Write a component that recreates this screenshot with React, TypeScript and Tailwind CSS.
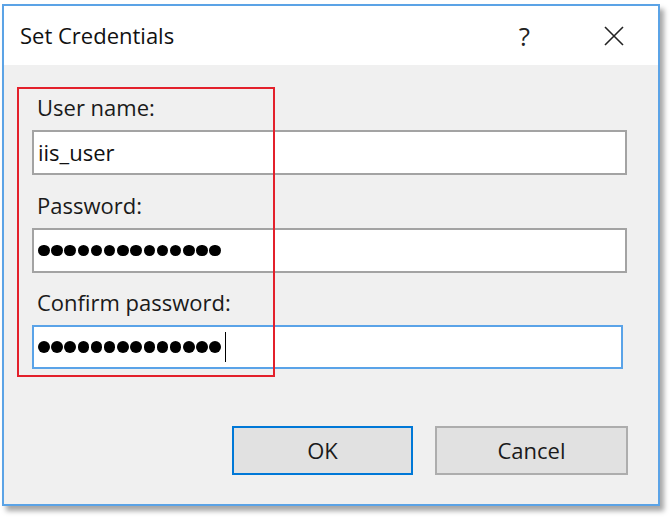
const FONT = "font-['Open_Sans','Noto_Sans',sans-serif]";

function Dots({ count, caret }: { count: number; caret?: boolean }) {
  return (
    <div className="flex items-center gap-[1.7px] pl-[4px]">
      {Array.from({ length: count }).map((_, i) => (
        <span key={i} className="block size-[11.5px] rounded-full bg-black" />
      ))}
      {caret && <span className="ml-[2px] block h-[30px] w-[1.5px] bg-black" />}
    </div>
  );
}

function Field({
  label,
  focused,
  children,
  className,
}: {
  label: string;
  focused?: boolean;
  children: React.ReactNode;
  className?: string;
}) {
  return (
    <div className={className}>
      <p className="ml-[5px] text-[22px] leading-[30px] text-[#1a1a1a]">{label}</p>
      <div
        className={
          "mt-[8px] flex items-center bg-white border-2 " +
          (focused ? "h-[44px] w-[591px] border-[#5aa3e8]" : "h-[45px] w-[595px] border-[#a3a3a3]")
        }
      >
        {children}
      </div>
    </div>
  );
}

export default function App() {
  return (
    <div className={`h-[519px] w-[671px] overflow-hidden bg-white pl-[2px] pt-[4px] ${FONT}`}>
      <div className="flex h-[502px] w-[658px] flex-col border-2 border-[#5ba3e6] shadow-[4px_5px_5px_rgba(0,0,0,0.35)]">
        {/* Title bar */}
        <div className="flex h-[59px] items-center bg-white pl-[16px]">
          <span className="text-[22px] text-[#111]">Set Credentials</span>
          <span className="ml-auto text-[26px] leading-none text-[#222]">?</span>
          <svg className="ml-[74px] mr-[34px]" width="20" height="20" viewBox="0 0 20 20" aria-hidden>
            <path d="M1 1 L19 19 M19 1 L1 19" stroke="#222" strokeWidth="1.6" fill="none" />
          </svg>
        </div>

        {/* Body */}
        <div className="relative flex flex-1 flex-col bg-[#f0f0f0] pl-[28px] pt-[27px]">
          <Field label="User name:">
            <span className="pl-[4px] text-[22px] text-[#111]">iis_user</span>
          </Field>
          <Field label="Password:" className="mt-[15px]">
            <Dots count={14} />
          </Field>
          <Field label="Confirm password:" className="mt-[14px]" focused>
            <Dots count={14} caret />
          </Field>

          <div className="mt-[57px] flex gap-[22px] pl-[200px]">
            <button className="h-[49px] w-[181px] border-2 border-[#0078d7] bg-[#e1e1e1] text-[22px] text-[#1a1a1a]">
              OK
            </button>
            <button className="h-[49px] w-[193px] border-2 border-[#adadad] bg-[#e1e1e1] text-[22px] text-[#1a1a1a]">
              Cancel
            </button>
          </div>

          {/* annotation box */}
          <div className="pointer-events-none absolute left-[13px] top-[22px] h-[290px] w-[258px] border-2 border-[#e3202b]" />
        </div>
      </div>
    </div>
  );
}
